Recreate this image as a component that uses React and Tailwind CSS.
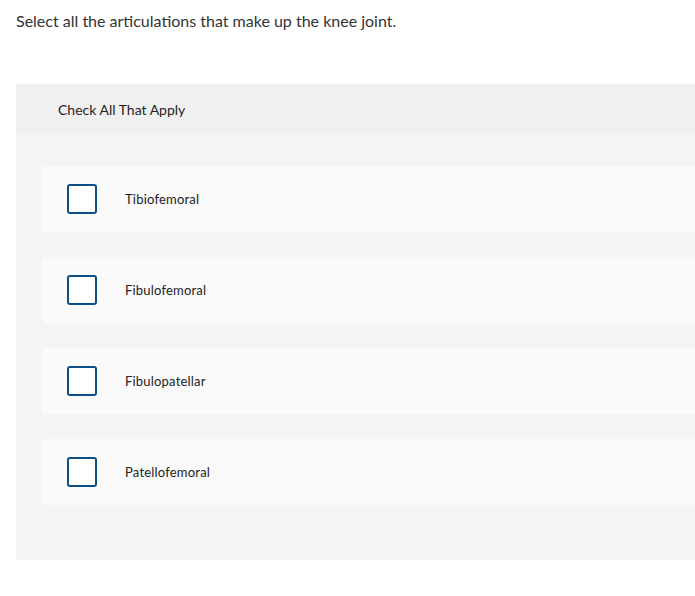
export default function App() {
  const items = ["Tibiofemoral", "Fibulofemoral", "Fibulopatellar", "Patellofemoral"];
  return (
    <div className="w-[695px] h-[596px] overflow-hidden bg-white" style={{ fontFamily: '"Lato", "Open Sans", sans-serif' }}>
      <div className="pt-[12px] pl-4 text-[16px] leading-[18px] text-[#333333]">
        Select all the articulations that make up the knee joint.
      </div>
      <div className="mt-[54px] ml-4 w-[720px] rounded-[2px] bg-[#f4f4f4]">
        <div className="h-[50px] bg-[#f0f0f0] pl-[42px] flex items-center text-[14px] text-[#1f1f1f]">
          Check All That Apply
        </div>
        <div className="pt-[32px] pb-[55px] pl-[26px] flex flex-col gap-[25px]">
          {items.map((t) => (
            <div key={t} className="h-[66px] rounded-[3px] bg-[#fafafa] flex items-center pl-[25px]">
              <div className="w-[30px] h-[30px] border-2 border-[#0d4e85] rounded-[3px] bg-white" />
              <span className="ml-[28px] pt-[2px] text-[13px] tracking-[0.2px] text-[#222222]">{t}</span>
            </div>
          ))}
        </div>
      </div>
    </div>
  );
}
